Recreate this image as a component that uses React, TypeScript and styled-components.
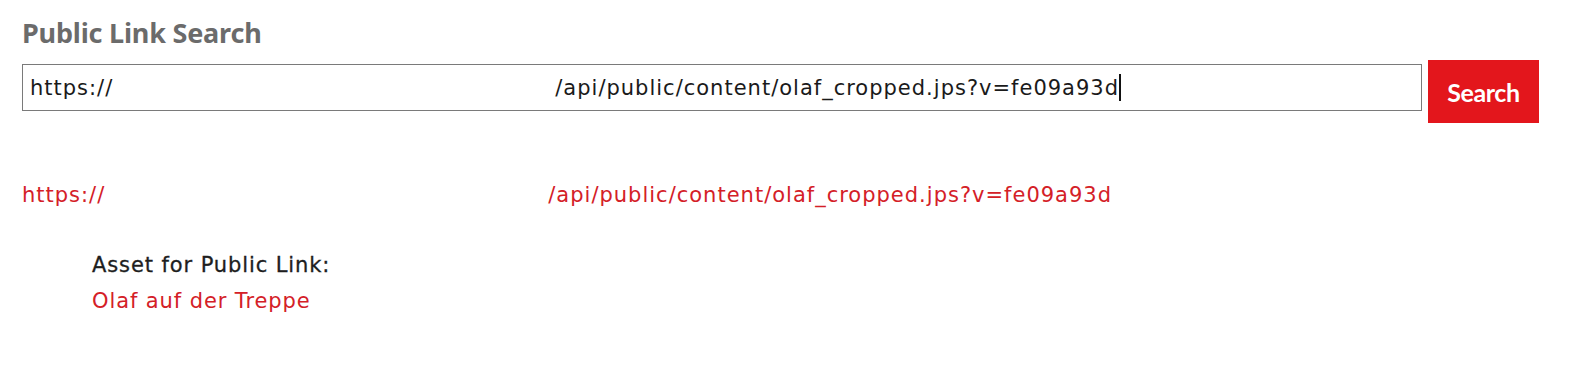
import styled, { createGlobalStyle } from "styled-components";

const GlobalStyle = createGlobalStyle`
  html, body {
    margin: 0;
    padding: 0;
    background: #ffffff;
  }
  body {
    font-family: "DejaVu Sans", "Noto Sans", sans-serif;
  }
`;

const Page = styled.div`
  padding: 14px 49px 40px 22px;
  display: flex;
  flex-direction: column;
`;

const Heading = styled.h2`
  margin: 0;
  font-family: "Noto Sans", "Open Sans", sans-serif;
  font-size: 27px;
  font-weight: 700;
  color: #6b6b6b;
  line-height: 38px;
  letter-spacing: -0.2px;
`;

const SearchRow = styled.div`
  display: flex;
  align-items: flex-start;
  gap: 6px;
  margin-top: 8px;
`;

const Field = styled.div`
  flex: 1;
  margin-top: 4px;
  height: 47px;
  box-sizing: border-box;
  border: 1px solid #7a7a7a;
  display: flex;
  align-items: center;
  padding: 0 7px;
  font-size: 21px;
  letter-spacing: 1px;
  color: #1a1a1a;
  white-space: nowrap;
`;

const Redacted = styled.span<{ $w: number }>`
  display: inline-block;
  width: ${({ $w }) => $w}px;
`;

const Caret = styled.span`
  display: inline-block;
  width: 1.5px;
  height: 27px;
  background: #111;
`;

const SearchButton = styled.button`
  width: 111px;
  height: 63px;
  border: none;
  background: #e3161c;
  color: #ffffff;
  font-family: Lato, "Noto Sans", sans-serif;
  font-weight: 700;
  font-size: 25px;
  letter-spacing: -0.4px;
  cursor: pointer;
`;

const LinkLine = styled.div`
  margin-top: 60px;
  font-size: 21px;
  letter-spacing: 1px;
  color: #d42027;
  white-space: nowrap;
`;

const AssetBlock = styled.div`
  margin-top: 40px;
  padding-left: 70px;
  display: flex;
  flex-direction: column;
  font-size: 21px;
  letter-spacing: 0.9px;
  line-height: 36px;
`;

const AssetLabel = styled.div`
  color: #1e1e1e;
  -webkit-text-stroke: 0.3px #1e1e1e;
`;

const AssetName = styled.a`
  color: #d42027;
  text-decoration: none;
`;

const PATH = "/api/public/content/olaf_cropped.jps?v=fe09a93d";

export default function App() {
  return (
    <>
      <GlobalStyle />
      <Page>
        <Heading>Public Link Search</Heading>
        <SearchRow>
          <Field>
            https://
            <Redacted $w={442} />
            {PATH}
            <Caret />
          </Field>
          <SearchButton>Search</SearchButton>
        </SearchRow>
        <LinkLine>
          https://
          <Redacted $w={443} />
          {PATH}
        </LinkLine>
        <AssetBlock>
          <AssetLabel>Asset for Public Link:</AssetLabel>
          <AssetName href="#">Olaf auf der Treppe</AssetName>
        </AssetBlock>
      </Page>
    </>
  );
}
